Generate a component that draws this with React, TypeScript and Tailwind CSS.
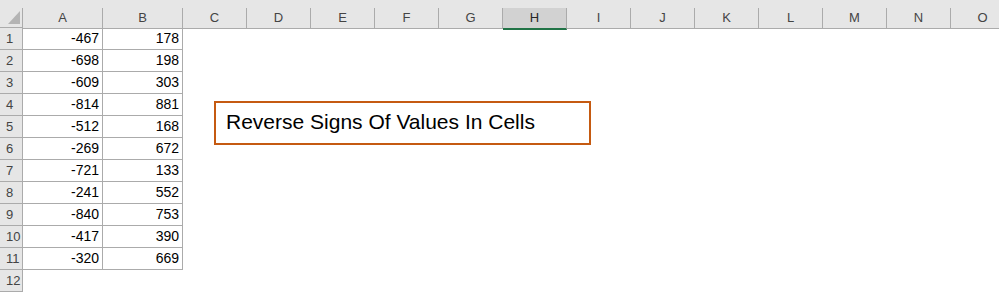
import React from "react";

const cols = [
  { l: "A", w: 80 },
  { l: "B", w: 80 },
  { l: "C", w: 64 },
  { l: "D", w: 64 },
  { l: "E", w: 64 },
  { l: "F", w: 64 },
  { l: "G", w: 64 },
  { l: "H", w: 64 },
  { l: "I", w: 64 },
  { l: "J", w: 64 },
  { l: "K", w: 64 },
  { l: "L", w: 64 },
  { l: "M", w: 64 },
  { l: "N", w: 64 },
  { l: "O", w: 64 },
];

const data: [number, number][] = [
  [-467, 178],
  [-698, 198],
  [-609, 303],
  [-814, 881],
  [-512, 168],
  [-269, 672],
  [-721, 133],
  [-241, 552],
  [-840, 753],
  [-417, 390],
  [-320, 669],
];

export default function App() {
  const rows = Array.from({ length: 12 }, (_, i) => i);
  return (
    <div
      className="relative w-[999px] h-[293px] overflow-hidden bg-white"
      style={{ fontFamily: '"Liberation Sans", Arial, sans-serif' }}
    >
      {/* header */}
      <div className="flex h-[28px] bg-[#e6e6e6]">
        <div className="flex w-[23px] shrink-0 flex-col pt-[8px]">
          <div className="relative flex-1 border-r border-b border-[#ababab]">
            <svg className="absolute left-[8px] top-[3px]" width="12" height="13" viewBox="0 0 12 13">
              <polygon points="12,0 12,13 0,13" fill="#b4b4b4" />
            </svg>
          </div>
        </div>
        {cols.map((c) => {
          const sel = c.l === "H";
          return (
            <div
              key={c.l}
              className="flex shrink-0 flex-col pt-[8px]"
              style={{ width: c.w }}
            >
              <div
                className={
                  sel
                    ? "flex flex-1 items-center justify-center border-r border-b-2 border-r-[#ababab] border-b-[#217346] bg-[#d2d2d2] text-[13px] text-[#262626]"
                    : "flex flex-1 items-center justify-center border-r border-b border-[#ababab] text-[13px] text-[#444444]"
                }
              >
                {c.l}
              </div>
            </div>
          );
        })}
      </div>
      {/* body */}
      {rows.map((r) => {
        const d = data[r];
        return (
          <div key={r} className="flex h-[22px]">
            <div className="flex w-[23px] shrink-0 items-center border-r border-b border-[#ababab] bg-[#e6e6e6] pl-[6px] text-[13px] text-[#444444]">
              {r + 1}
            </div>
            {cols.map((c, ci) => {
              const bordered = d && ci < 2;
              return (
                <div
                  key={c.l}
                  className={
                    bordered
                      ? "flex shrink-0 items-center justify-end border-r border-b border-[#ababab] pr-[3px] text-[14px] text-black"
                      : "shrink-0"
                  }
                  style={{ width: c.w }}
                >
                  {bordered ? d[ci] : null}
                </div>
              );
            })}
          </div>
        );
      })}
      {/* text box */}
      <div className="absolute left-[214px] top-[101px] flex h-[44px] w-[377px] items-start border-2 border-[#c55a11] bg-white pl-[10px] pt-[8px] text-[21px] leading-[21px] text-black">
        Reverse Signs Of Values In Cells
      </div>
    </div>
  );
}
